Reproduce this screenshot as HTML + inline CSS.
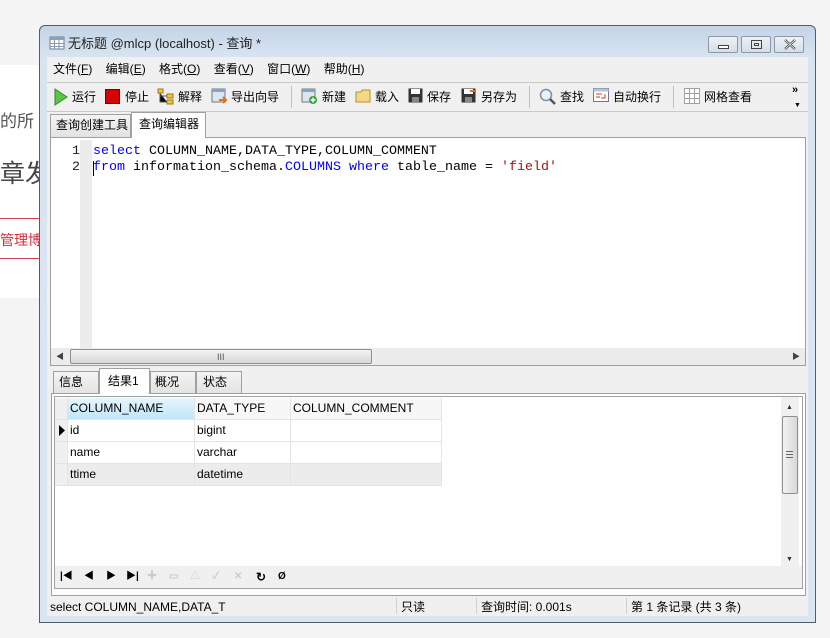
<!DOCTYPE html>
<html><head><meta charset="utf-8">
<style>
*{margin:0;padding:0;box-sizing:border-box}
body{width:830px;height:638px;background:#f4f4f4;position:relative;overflow:hidden;font-family:"Liberation Sans","Noto Sans CJK SC",sans-serif;font-size:12px;color:#000}
.a{position:absolute}
.t{position:absolute;white-space:nowrap;line-height:14px}
.mono{font-family:"Liberation Mono","DejaVu Sans Mono",monospace;font-size:13.33px;line-height:16px;white-space:pre}
.kw{color:#0000ff}.st{color:#a31515}
.tab{position:absolute;border:1px solid #a0a0a0;border-bottom:none;background:linear-gradient(#f4f4f4,#e2e2e2);font-size:12px;padding-left:5px;line-height:20px}
.btn{position:absolute;top:36px;height:17px;border:1px solid #8d99a8;border-radius:2px;background:linear-gradient(#eef2f7,#d4dde8)}
.cell{position:absolute;height:22px;border-right:1px solid #e4e4e4;border-bottom:1px solid #e4e4e4;line-height:21px;padding-left:2px;font-size:12px}
</style></head><body>
<div class="a" style="left:0;top:65px;width:40px;height:233px;background:#fff"></div>
<div class="t" style="left:0;top:112px;font-size:17px;line-height:20px;color:#555">的所</div>
<div class="t" style="left:0;top:160px;font-size:25px;line-height:28px;color:#444">章发</div>
<div class="a" style="left:0;top:218px;width:40px;height:1px;background:#d04050"></div>
<div class="a" style="left:0;top:258px;width:40px;height:1px;background:#d04050"></div>
<div class="t" style="left:0;top:232px;font-size:14px;line-height:16px;color:#d03040">管理博</div>

<div class="a" style="left:39px;top:25px;width:777px;height:598px;border:1px solid #555c66;border-radius:6px 6px 0 0;background:linear-gradient(#c3d4e7 0px,#d9e4f1 32px,#dae5f2 100%)"></div>
<svg class="a" style="left:49px;top:35px" width="16" height="16" viewBox="0 0 16 16"><rect x="1" y="2" width="14" height="12" fill="#fff" stroke="#6b7a8c"/><rect x="1" y="2" width="14" height="3" fill="#8aa0bb"/><path d="M1 8.5H15M1 11.5H15M5.5 5V14M10 5V14" stroke="#8a9aac"/></svg>
<div class="t" style="left:68px;top:36px;font-size:13px;line-height:16px;color:#222">无标题 @mlcp (localhost) - 查询 *</div>
<div class="btn" style="left:708px;width:30px"><div class="a" style="left:9px;top:8px;width:11px;height:4px;border:1px solid #444;background:#fff"></div></div>
<div class="btn" style="left:741px;width:30px"><div class="a" style="left:9px;top:3px;width:11px;height:9px;border:1px solid #444"></div><div class="a" style="left:12px;top:6px;width:5px;height:3px;border:1px solid #444"></div></div>
<div class="btn" style="left:774px;width:30px"><svg class="a" style="left:9px;top:2px" width="12" height="11"><path d="M1 1L11 10M11 1L1 10" stroke="#444" stroke-width="2.2"/><path d="M1 1L11 10M11 1L1 10" stroke="#fff" stroke-width=".8"/></svg></div>

<div class="a" style="left:47px;top:57px;width:761px;height:559px;background:#f0f0f0"></div>
<div class="t" style="left:53px;top:62px">文件(<u>F</u>)&nbsp;&nbsp;&nbsp; 编辑(<u>E</u>)&nbsp;&nbsp;&nbsp; 格式(<u>O</u>)&nbsp;&nbsp;&nbsp; 查看(<u>V</u>)&nbsp;&nbsp;&nbsp; 窗口(<u>W</u>)&nbsp;&nbsp;&nbsp; 帮助(<u>H</u>)</div>
<div class="a" style="left:47px;top:82px;width:761px;height:1px;background:#c8c8c8"></div>
<svg class="a" style="left:54px;top:88px" width="14" height="18"><path d="M1 1L13 9L1 17Z" fill="#5bc44a" stroke="#2f8a2a"/></svg>
<div class="t" style="left:72px;top:90px">运行</div>
<div class="a" style="left:105px;top:89px;width:15px;height:15px;background:#d80000;border:1px solid #700"></div>
<div class="t" style="left:125px;top:90px">停止</div>
<svg class="a" style="left:157px;top:88px" width="18" height="17"><rect x="1" y="1" width="5" height="4" fill="#f5c33c" stroke="#a07a10"/><rect x="10" y="6" width="6" height="4" fill="#f5c33c" stroke="#a07a10"/><rect x="10" y="12" width="6" height="4" fill="#f5c33c" stroke="#a07a10"/><path d="M3 5V14H10M3 8H10" stroke="#555"/></svg>
<div class="t" style="left:178px;top:90px">解释</div>
<svg class="a" style="left:211px;top:88px" width="17" height="17"><rect x="1" y="1" width="13" height="13" fill="#dfe5ee" stroke="#6b7a8c"/><rect x="1" y="1" width="13" height="3" fill="#8aa0bb"/><path d="M8 12H15M12 9L15 12L12 15" stroke="#e07020" stroke-width="2" fill="none"/></svg>
<div class="t" style="left:231px;top:90px">导出向导</div>
<div class="a" style="left:291px;top:86px;width:1px;height:22px;background:#c0c0c0"></div>
<svg class="a" style="left:301px;top:88px" width="17" height="17"><rect x="1" y="1" width="13" height="13" fill="#dfe5ee" stroke="#6b7a8c"/><rect x="1" y="1" width="13" height="3" fill="#8aa0bb"/><circle cx="12" cy="12" r="4" fill="#3aa23a"/><path d="M12 9.5V14.5M9.5 12H14.5" stroke="#fff" stroke-width="1.5"/></svg>
<div class="t" style="left:322px;top:90px">新建</div>
<svg class="a" style="left:355px;top:89px" width="17" height="14"><path d="M1 3H6L7 1H15V13H1Z" fill="#f3d887" stroke="#b8922a"/></svg>
<div class="t" style="left:375px;top:90px">载入</div>
<svg class="a" style="left:408px;top:88px" width="15" height="15"><rect x="0.5" y="0.5" width="14" height="14" fill="#333"/><rect x="3" y="1" width="9" height="5" fill="#fff"/><rect x="4" y="9" width="7" height="5" fill="#888"/></svg>
<div class="t" style="left:427px;top:90px">保存</div>
<svg class="a" style="left:461px;top:88px" width="16" height="16"><rect x="0.5" y="0.5" width="14" height="14" fill="#333"/><rect x="3" y="1" width="9" height="5" fill="#fff"/><rect x="4" y="9" width="7" height="5" fill="#888"/><path d="M9 3L15 3" stroke="#e07020" stroke-width="2"/></svg>
<div class="t" style="left:481px;top:90px">另存为</div>
<div class="a" style="left:529px;top:86px;width:1px;height:22px;background:#c0c0c0"></div>
<svg class="a" style="left:539px;top:88px" width="17" height="17"><circle cx="7" cy="7" r="5.5" fill="#e8f2fb" stroke="#7a8ea6" stroke-width="1.5"/><path d="M11 11L16 16" stroke="#555" stroke-width="2.5"/></svg>
<div class="t" style="left:560px;top:90px">查找</div>
<svg class="a" style="left:593px;top:88px" width="17" height="15"><rect x="0.5" y="0.5" width="15" height="13" fill="#fff" stroke="#6b7a8c"/><rect x="0.5" y="0.5" width="15" height="3" fill="#b8c4d4"/><path d="M3 6H9M3 9H7M12 6V10H8" stroke="#d04020" fill="none"/></svg>
<div class="t" style="left:613px;top:90px">自动换行</div>
<div class="a" style="left:673px;top:86px;width:1px;height:22px;background:#c0c0c0"></div>
<svg class="a" style="left:684px;top:88px" width="16" height="16"><path d="M0.5 0.5H15.5V15.5H0.5ZM5.5 0.5V15.5M10.5 0.5V15.5M0.5 5.5H15.5M0.5 10.5H15.5" stroke="#a0a0a0" fill="#fff"/></svg>
<div class="t" style="left:704px;top:90px">网格查看</div>
<div class="t" style="left:792px;top:83px;font-size:11px;font-weight:bold">»</div>
<div class="t" style="left:794px;top:99px;font-size:7px">▼</div>
<div class="a" style="left:47px;top:111px;width:761px;height:1px;background:#c8c8c8"></div>

<div class="tab" style="left:50px;top:114px;width:81px;height:23px">查询创建工具</div>
<div class="tab" style="left:131px;top:112px;width:75px;height:26px;background:#fff;z-index:2;line-height:22px;padding-left:7px">查询编辑器</div>
<div class="a" style="left:50px;top:137px;width:756px;height:229px;border:1px solid #a0a0a0;background:#fff"></div>
<div class="a" style="left:80px;top:140px;width:12px;height:208px;background:#ececec"></div>
<div class="t mono" style="left:72px;top:144px;color:#222">1</div>
<div class="t mono" style="left:72px;top:160px;color:#222">2</div>
<div class="t mono" style="left:93px;top:144px"><span class="kw">select</span> COLUMN_NAME,DATA_TYPE,COLUMN_COMMENT</div>
<div class="t mono" style="left:93px;top:160px"><span class="kw">from</span> information_schema.<span class="kw">COLUMNS</span> <span class="kw">where</span> table_name = <span class="st">'field'</span></div>
<div class="a" style="left:93px;top:161px;width:1px;height:15px;background:#000"></div>
<div class="a" style="left:51px;top:348px;width:754px;height:17px;background:#ececec"></div>
<div class="t" style="left:56px;top:350px;font-size:8px;color:#444">◀</div>
<div class="t" style="left:792px;top:350px;font-size:8px;color:#444">▶</div>
<div class="a" style="left:70px;top:349px;width:302px;height:15px;border:1px solid #8e8f8f;border-radius:2px;background:linear-gradient(#f2f2f2,#d8d8d8)"></div>
<div class="t" style="left:217px;top:350px;font-size:9px;color:#555">III</div>

<div class="tab" style="left:53px;top:371px;width:46px;height:23px">信息</div>
<div class="tab" style="left:99px;top:368px;width:51px;height:26px;background:#fff;z-index:2;line-height:24px;padding-left:8px">结果1</div>
<div class="tab" style="left:150px;top:371px;width:46px;height:23px;padding-left:4px">概况</div>
<div class="tab" style="left:196px;top:371px;width:46px;height:23px;padding-left:6px">状态</div>
<div class="a" style="left:51px;top:393px;width:755px;height:203px;border:1px solid #a0a0a0;background:#fff"></div>
<div class="a" style="left:54px;top:396px;width:749px;height:193px;border:1px solid #a0a0a0;background:#fff"></div>
<div class="cell" style="left:55px;top:398px;width:13px;background:#f0f0f0"></div>
<div class="cell" style="left:68px;top:398px;width:127px;background:linear-gradient(#e6f5fc,#bfe6f9)">COLUMN_NAME</div>
<div class="cell" style="left:195px;top:398px;width:96px;background:#f7f7f7">DATA_TYPE</div>
<div class="cell" style="left:291px;top:398px;width:151px;background:#f7f7f7">COLUMN_COMMENT</div>
<div class="cell" style="left:55px;top:420px;width:13px;background:#f0f0f0"></div>
<svg class="a" style="left:58px;top:424px" width="8" height="13"><path d="M1 1L7 6.5L1 12Z" fill="#000"/></svg>
<div class="cell" style="left:68px;top:420px;width:127px">id</div>
<div class="cell" style="left:195px;top:420px;width:96px">bigint</div>
<div class="cell" style="left:291px;top:420px;width:151px"></div>
<div class="cell" style="left:55px;top:442px;width:13px;background:#f0f0f0"></div>
<div class="cell" style="left:68px;top:442px;width:127px">name</div>
<div class="cell" style="left:195px;top:442px;width:96px">varchar</div>
<div class="cell" style="left:291px;top:442px;width:151px"></div>
<div class="cell" style="left:55px;top:464px;width:13px;background:#f0f0f0"></div>
<div class="cell" style="left:68px;top:464px;width:127px;background:#ececec">ttime</div>
<div class="cell" style="left:195px;top:464px;width:96px;background:#ececec">datetime</div>
<div class="cell" style="left:291px;top:464px;width:151px;background:#ececec"></div>
<div class="a" style="left:781px;top:397px;width:18px;height:169px;background:#f0f0f0"></div>
<div class="t" style="left:786px;top:401px;font-size:7px;color:#333">▲</div>
<div class="t" style="left:786px;top:553px;font-size:7px;color:#333">▼</div>
<div class="a" style="left:782px;top:416px;width:16px;height:78px;border:1px solid #8e8f8f;border-radius:2px;background:linear-gradient(90deg,#f2f2f2,#d8d8d8)"></div>
<div class="a" style="left:786px;top:451px;width:7px;height:7px;border-top:1px solid #666;border-bottom:1px solid #666"></div>
<div class="a" style="left:786px;top:454px;width:7px;height:1px;background:#666"></div>
<div class="a" style="left:55px;top:566px;width:747px;height:22px;background:#f0f0f0"></div>
<div class="t" style="left:60px;top:570px;font-size:10px;font-weight:bold;letter-spacing:0">
<span style="position:absolute;left:0">|◀</span><span style="position:absolute;left:24px">◀</span><span style="position:absolute;left:46px">▶</span><span style="position:absolute;left:66px">▶|</span>
<span style="position:absolute;left:87px;color:#ccc">✚</span><span style="position:absolute;left:109px;color:#ccc">▭</span><span style="position:absolute;left:130px;color:#ccc">△</span><span style="position:absolute;left:152px;color:#ccc">✓</span><span style="position:absolute;left:174px;color:#ccc">✕</span><span style="position:absolute;left:196px;font-size:12px">↻</span><span style="position:absolute;left:218px">Ø</span></div>

<div class="a" style="left:47px;top:597px;width:761px;height:18px;background:#f0f0f0"></div>
<div class="t" style="left:50px;top:600px">select COLUMN_NAME,DATA_T</div>
<div class="a" style="left:396px;top:598px;width:1px;height:16px;background:#d0d0d0"></div>
<div class="t" style="left:401px;top:600px">只读</div>
<div class="a" style="left:476px;top:598px;width:1px;height:16px;background:#d0d0d0"></div>
<div class="t" style="left:481px;top:600px">查询时间: 0.001s</div>
<div class="a" style="left:626px;top:598px;width:1px;height:16px;background:#d0d0d0"></div>
<div class="t" style="left:631px;top:600px">第 1 条记录 (共 3 条)</div>
</body></html>
